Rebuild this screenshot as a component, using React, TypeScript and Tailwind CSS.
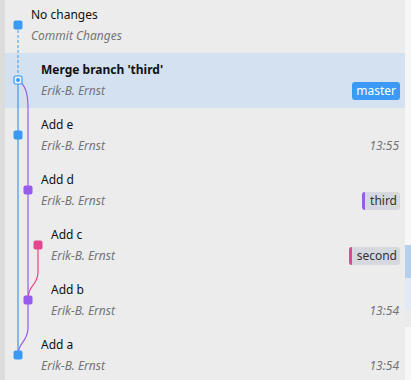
const commits = [
  { title: 'No changes', sub: 'Commit Changes', indent: 'pl-[26px]', time: '', badge: null, selected: false, first: true },
  { title: "Merge branch 'third'", sub: 'Erik-B. Ernst', indent: 'pl-[36px]', time: '', badge: 'master', selected: true, bold: true },
  { title: 'Add e', sub: 'Erik-B. Ernst', indent: 'pl-[36px]', time: '13:55', badge: null },
  { title: 'Add d', sub: 'Erik-B. Ernst', indent: 'pl-[36px]', time: '', badge: 'third' },
  { title: 'Add c', sub: 'Erik-B. Ernst', indent: 'pl-[46px]', time: '', badge: 'second' },
  { title: 'Add b', sub: 'Erik-B. Ernst', indent: 'pl-[46px]', time: '13:54', badge: null },
  { title: 'Add a', sub: 'Erik-B. Ernst', indent: 'pl-[36px]', time: '13:54', badge: null },
]

const BLUE = '#3a9af5'
const PURPLE = '#965ded'
const PINK = '#e5458f'

function Badge({ name }: { name: string }) {
  if (name === 'master') {
    return (
      <span className="h-[18px] px-[4px] rounded-[3px] bg-[#3a9af5] text-white text-[12px] leading-[18px]">
        master
      </span>
    )
  }
  const bar = name === 'third' ? 'bg-[#965ded]' : 'bg-[#e5458f]'
  return (
    <span className="h-[18px] flex rounded-[3px] bg-[#d5d8de] text-[#333] text-[12px] leading-[18px] overflow-hidden">
      <span className={`w-[3px] ${bar}`} />
      <span className="pl-[5px] pr-[3px]">{name}</span>
    </span>
  )
}

function Graph() {
  return (
    <svg className="absolute left-0 top-0" width="60" height="380" viewBox="0 0 60 380">
      {/* working copy to merge */}
      <line x1="18" y1="25" x2="18" y2="80" stroke={BLUE} strokeWidth="1" strokeDasharray="3 2" />
      {/* main lane */}
      <line x1="18" y1="80" x2="18" y2="355" stroke={BLUE} strokeWidth="1.2" />
      {/* third branch */}
      <path d="M18 80 C25 85, 28 92, 28 108 L28 328 C28 342, 18 342, 18 355" fill="none" stroke={PURPLE} strokeWidth="1.2" />
      {/* second branch */}
      <path d="M38 245 L38 272 C38 286, 28 284, 28 300" fill="none" stroke={PINK} strokeWidth="1.2" />

      <rect x="13.5" y="20.5" width="9" height="9" rx="2" fill={BLUE} />
      <rect x="14" y="76" width="8" height="8" rx="1.5" fill="#eef3fa" stroke={BLUE} strokeWidth="1.2" />
      <circle cx="18" cy="80" r="2" fill={BLUE} />
      <rect x="13.5" y="130.5" width="9" height="9" rx="2" fill={BLUE} />
      <rect x="23.5" y="185.5" width="9" height="9" rx="2" fill={PURPLE} />
      <rect x="33.5" y="240.5" width="9" height="9" rx="2" fill={PINK} />
      <rect x="23.5" y="295.5" width="9" height="9" rx="2" fill={PURPLE} />
      <rect x="13.5" y="350.5" width="9" height="9" rx="2" fill={BLUE} />
    </svg>
  )
}

export default function App() {
  return (
    <div className="w-[411px] h-[380px] overflow-hidden flex bg-[#ececed] font-['Noto_Sans',_sans-serif]">
      <div className="w-[5px] bg-[#dcdcdd]" />
      <div className="relative flex-1">
        <div className="flex flex-col -mt-[2px]">
          {commits.map((c, i) => (
            <div
              key={i}
              className={`h-[55px] flex flex-col pt-[8px] ${c.indent} pr-[5px] ${c.selected ? 'bg-[#d3e1f0]' : ''}`}
            >
              <div className={`h-[18px] text-[12px] leading-[18px] text-[#111] ${c.bold ? 'font-bold' : ''}`}>
                {c.title}
              </div>
              <div className="mt-[3px] h-[18px] flex items-center justify-between">
                <span className="text-[12px] leading-[18px] italic text-[#747474]">{c.sub}</span>
                {c.badge && <Badge name={c.badge} />}
                {c.time && <span className="text-[12px] leading-[18px] italic text-[#747474] pr-[1px]">{c.time}</span>}
              </div>
            </div>
          ))}
        </div>
        <div className="absolute -left-[5px] top-0">
          <Graph />
        </div>
      </div>
      <div className="w-[6px] flex flex-col bg-[#f7f7f8]">
        <div className="h-[245px]" />
        <div className="h-[33px] bg-[#b6d0ec]" />
        <div className="h-[32px] bg-[#e0e9f4]" />
        <div className="h-[17px] bg-[#ebebec]" />
      </div>
    </div>
  )
}
